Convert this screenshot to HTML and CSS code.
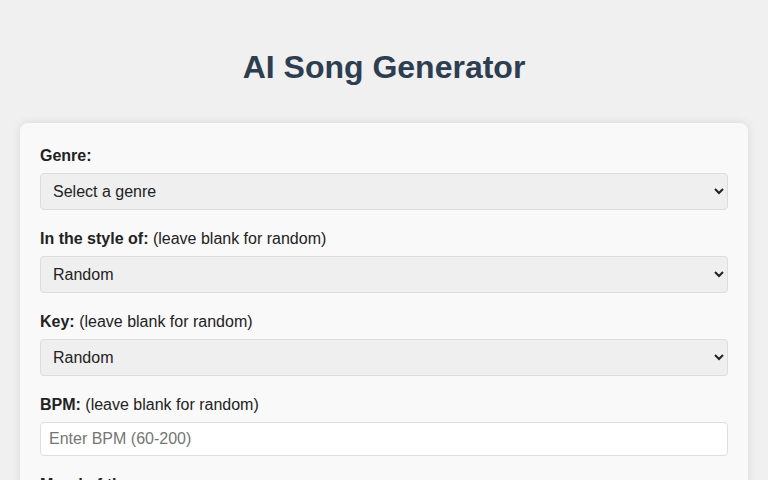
FILE: index.html
```html
<!DOCTYPE html>
<html lang="en">
<head>
  <meta charset="UTF-8" />
  <meta name="viewport" content="width=device-width, initial-scale=1" />
  <title>AI Song Generator</title>
  <link rel="stylesheet" href="styles.css">
</head>
<body>
  <h1>AI Song Generator</h1>
  <div class="container">
    <form id="songForm" onsubmit="event.preventDefault();">
      <div class="form-group">
        <label for="genre"><strong>Genre:</strong></label>
        <select id="genre" name="genre">
          <option value="">Select a genre</option>
          <option>Pop</option>
          <option>Rock</option>
          <option>Hip Hop</option>
          <option>Jazz</option>
          <option>Country</option>
        </select>
      </div>

      <div class="form-group">
        <label for="style"><strong>In the style of:</strong> (leave blank for random)</label>
        <select id="style" name="style">
          <option value="">Random</option>
        </select>
      </div>

      <div class="form-group">
        <label for="key"><strong>Key:</strong> (leave blank for random)</label>
        <select id="key" name="key">
          <option value="">Random</option>
          <option>C Major</option>
          <option>G Major</option>
          <option>A Minor</option>
        </select>
      </div>

      <div class="form-group">
        <label for="bpm"><strong>BPM:</strong> (leave blank for random)</label>
        <input type="number" id="bpm" name="bpm" placeholder="Enter BPM (60-200)" min="60" max="200" />
      </div>

      <div class="form-group">
        <label for="mood"><strong>Mood of the song:</strong></label>
        <input type="text" id="mood" name="mood" placeholder="e.g. happy, melancholic" />
      </div>
    </form>
  </div>
</body>
</html>
```

FILE: styles.css
```css
body {
  font-family: 'Liberation Sans', Arial, sans-serif;
  background-color: #f0f0f0;
  color: #222;
  margin: 0;
  padding: 20px;
}
h1 {
  text-align: center;
  color: #2c3e50;
  font-size: 32px;
  margin: 29px 0 37px;
}
.container {
  background-color: #f9f9f9;
  padding: 24px 20px 20px;
  border-radius: 8px;
  box-shadow: 0 0 10px rgba(0, 0, 0, 0.1);
}
.form-group {
  margin-bottom: 20px;
}
label {
  display: block;
  font-size: 16px;
  margin-bottom: 8px;
}
select,
input[type="number"],
input[type="text"] {
  width: 100%;
  box-sizing: border-box;
  padding: 8px;
  font-family: inherit;
  font-size: 16px;
  border: 1px solid #ddd;
  border-radius: 4px;
}
select {
  background-color: #efefef;
  color: #222;
}
input[type="number"],
input[type="text"] {
  background-color: #fff;
  padding: 7px 8px;
}
```
